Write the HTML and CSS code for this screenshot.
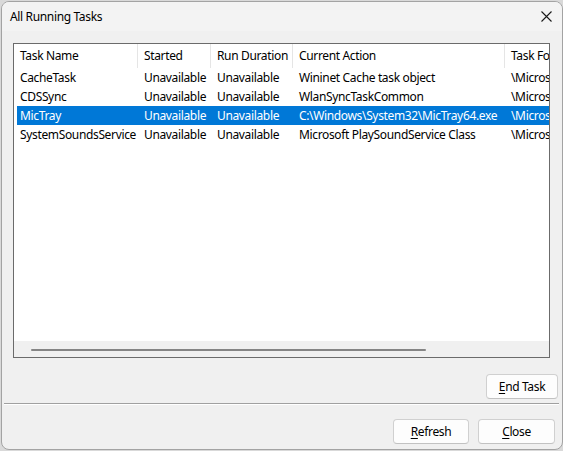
FILE: index.html
```html
<!DOCTYPE html>
<html>
<head>
<meta charset="utf-8">
<link rel="stylesheet" href="styles.css">
</head>
<body>
<div class="window">
  <div class="titlebar">
    <span class="title">All Running Tasks</span>
    <svg class="close-x" width="11" height="11" viewBox="0 0 11 11"><path d="M0.5 0.5 L10.5 10.5 M10.5 0.5 L0.5 10.5" stroke="#1a1a1a" stroke-width="1.1" fill="none"/></svg>
  </div>
  <div class="content">
    <div class="listbox">
      <div class="header">
        <div class="hcell c1">Task Name</div>
        <div class="hcell c2">Started</div>
        <div class="hcell c3">Run Duration</div>
        <div class="hcell c4">Current Action</div>
        <div class="hcell c5">Task Folder</div>
      </div>
      <div class="rows">
        <div class="row">
          <div class="cell r1">CacheTask</div>
          <div class="cell c2">Unavailable</div>
          <div class="cell c3">Unavailable</div>
          <div class="cell c4">Wininet Cache task object</div>
          <div class="cell c5">\Microsoft\Windows\Wininet\</div>
        </div>
        <div class="row">
          <div class="cell r1">CDSSync</div>
          <div class="cell c2">Unavailable</div>
          <div class="cell c3">Unavailable</div>
          <div class="cell c4">WlanSyncTaskCommon</div>
          <div class="cell c5">\Microsoft\Windows\WlanSvc\</div>
        </div>
        <div class="row selected">
          <div class="cell r1">MicTray</div>
          <div class="cell c2">Unavailable</div>
          <div class="cell c3">Unavailable</div>
          <div class="cell c4">C:\Windows\System32\MicTray64.exe</div>
          <div class="cell c5">\Microsoft\Windows\</div>
        </div>
        <div class="row">
          <div class="cell r1">SystemSoundsService</div>
          <div class="cell c2">Unavailable</div>
          <div class="cell c3">Unavailable</div>
          <div class="cell c4">Microsoft PlaySoundService Class</div>
          <div class="cell c5">\Microsoft\Windows\Multimedia\</div>
        </div>
      </div>
      <div class="hscroll"><div class="thumb"></div></div>
    </div>
    <div class="endrow">
      <button class="btn btn-end"><u>E</u>nd Task</button>
    </div>
    <div class="separator"></div>
    <div class="bottomrow">
      <button class="btn btn-refresh"><u>R</u>efresh</button>
      <button class="btn btn-close"><u>C</u>lose</button>
    </div>
  </div>
</div>
</body>
</html>
```

FILE: styles.css
```css
html, body {
  margin: 0;
  padding: 0;
  background: #d9d9d9;
}
body {
  font-family: "Segoe UI", "Noto Sans", "Liberation Sans", sans-serif;
  font-size: 12px;
  letter-spacing: -0.35px;
  color: #000;
  width: 563px;
  height: 451px;
  overflow: hidden;
}
.window {
  margin: 1px 0 0 1px;
  width: 562px;
  height: 449px;
  box-sizing: border-box;
  border: 1px solid #a3a3a3;
  border-radius: 8px;
  background: #f0f0f0;
  overflow: hidden;
  display: flex;
  flex-direction: column;
}
.titlebar {
  height: 29px;
  flex: none;
  background: #f3f3f3;
  display: flex;
  align-items: center;
  justify-content: space-between;
  padding: 0 10px 0 8px;
}
.title {
  line-height: 16px;
}
.close-x {
  display: block;
  margin-top: -1px;
}
.content {
  flex: 1;
  display: flex;
  flex-direction: column;
}
.listbox {
  margin: 12px 0 0 11px;
  width: 537px;
  height: 315px;
  box-sizing: border-box;
  border: 1px solid #6b6b6b;
  background: #fff;
  display: flex;
  flex-direction: column;
  overflow: hidden;
}
.header {
  display: flex;
  height: 24px;
  flex: none;
}
.hcell {
  box-sizing: border-box;
  padding-left: 6px;
  line-height: 23px;
  white-space: nowrap;
  border-right: 1px solid #e5e5e5;
  overflow: hidden;
  flex: none;
}
.c1 { width: 124px; }
.c2 { width: 73px; }
.c3 { width: 82px; }
.c4 { width: 212px; }
.c5 { width: 120px; border-right: none; }
.rows {
  flex: 1;
}
.row {
  display: flex;
  height: 19px;
  margin-left: 3px;
}
.cell {
  box-sizing: border-box;
  padding-left: 6px;
  line-height: 19px;
  white-space: nowrap;
  overflow: hidden;
  flex: none;
}
.cell.r1 { width: 121px; padding-left: 3px; }
.row.selected {
  background: #0078d7;
  color: #fff;
}
.hscroll {
  height: 16px;
  flex: none;
  background: #f0f0f0;
  display: flex;
  align-items: center;
}
.thumb {
  margin-left: 17px;
  width: 395px;
  height: 2px;
  border-radius: 1px;
  background: #858585;
  margin-top: 1px;
}
.endrow {
  display: flex;
  justify-content: flex-end;
  padding: 16px 4px 0 0;
}
.btn {
  font-family: inherit;
  font-size: 12px;
  letter-spacing: -0.35px;
  color: #000;
  background: #fdfdfd;
  border: 1px solid #d0d0d0;
  border-bottom-color: #c2c2c2;
  border-radius: 4px;
  height: 25px;
  box-sizing: border-box;
  padding: 0;
  line-height: 22px;
  text-align: center;
}
.btn u {
  text-decoration-thickness: 1px;
  text-underline-offset: 2px;
}
.btn-end { width: 72px; }
.separator {
  margin: 4px 3px 0 2px;
  height: 1px;
  background: #a0a0a0;
  border-bottom: 1px solid #ffffff;
}
.bottomrow {
  display: flex;
  justify-content: flex-end;
  gap: 9px;
  padding: 14px 7px 0 0;
}
.btn-refresh { width: 76px; }
.btn-close { width: 77px; }
```
